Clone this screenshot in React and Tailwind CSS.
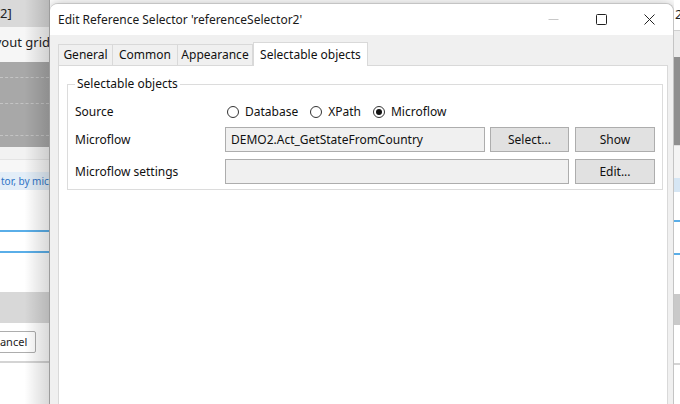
import React from "react";

const font = "font-['Segoe_UI','Noto_Sans',sans-serif]";

const Radio = ({ label, checked }) => (
  <label className="flex items-center gap-[6px]">
    <span className="w-[12px] h-[12px] rounded-full border border-[#333] bg-white flex items-center justify-center">
      {checked && <span className="w-[6px] h-[6px] rounded-full bg-[#111]" />}
    </span>
    <span>{label}</span>
  </label>
);

const Button = ({ children, className = "" }) => (
  <button
    className={`h-[25px] bg-[#e1e1e1] border border-[#adadad] text-[12px] text-[#111] ${className}`}
  >
    {children}
  </button>
);

// background editor peeking out on the left
const LeftStrip = () => (
  <div className="relative w-[50px] shrink-0 h-full overflow-hidden text-[13px] text-[#222] border-r border-[#9c9c9c]">
    <div className="h-[27px] bg-[#d9d9d9] flex items-center whitespace-nowrap">2]</div>
    <div className="h-[35px] bg-[#f6f6f6] flex items-center justify-end whitespace-nowrap pb-[4px] -mr-[1px]">
      Layout grid
    </div>
    <div className="h-[85px] bg-[#a8a8a8] flex flex-col">
      <div className="h-[15px]" />
      <div className="border-t border-dashed border-[#c4c4c4]" />
      <div className="h-[25px]" />
      <div className="border-t border-dashed border-[#c4c4c4]" />
      <div className="h-[31px]" />
      <div className="border-t border-dashed border-[#c4c4c4]" />
    </div>
    <div className="h-[12px] bg-[#f2f2f2]" />
    <div className="h-[13px] bg-[#f7f7f7] border-t border-[#e4e4e4]" />
    <div className="h-[18px] bg-[#e3eef8] flex items-center whitespace-nowrap text-[10px] text-[#2f74c6] pl-[1px]">
      tor, by microflow
    </div>
    <div className="h-[40px] bg-white" />
    <div className="h-[2px] bg-[#5aaee8]" />
    <div className="h-[19px] bg-white" />
    <div className="h-[2px] bg-[#5aaee8]" />
    <div className="h-[39px] bg-white" />
    <div className="h-[31px] bg-[#d8d8d8]" />
    <div className="h-[38px] bg-white flex items-center">
      <span className="-ml-[14px] h-[22px] pl-[6px] pr-[8px] border border-[#adadad] rounded-[2px] bg-white flex items-center text-[11px]">
        Cancel
      </span>
    </div>
    <div className="h-[2px] bg-[#d4d4d4]" />
    <div className="h-[60px] bg-white" />
    <div className="absolute inset-0 bg-linear-to-r from-transparent via-transparent to-black/15" />
  </div>
);

const RightStrip = () => (
  <div className="relative flex-1 h-full overflow-hidden text-[13px] text-[#222]">
    <div className="h-[30px] bg-white flex items-center whitespace-nowrap pl-[1px]">2</div>
    <div className="h-[27px] bg-[#ececec] border-t border-[#d0d0d0]" />
    <div className="h-[88px] bg-[#8f8f8f]" />
    <div className="h-[33px] bg-[#f4f4f4] border-t border-[#dedede]" />
    <div className="h-[14px] bg-[#d6e6f4]" />
    <div className="h-[28px] bg-white" />
    <div className="h-[2px] bg-[#5aaee8]" />
    <div className="h-[31px] bg-white" />
    <div className="h-[2px] bg-[#5aaee8]" />
    <div className="h-[39px] bg-white" />
    <div className="h-[31px] bg-[#c9c9c9]" />
    <div className="h-[38px] bg-white" />
    <div className="h-[2px] bg-[#d4d4d4]" />
    <div className="h-[60px] bg-white" />
  </div>
);

const tabs = [
  { label: "General", w: "w-[55px]" },
  { label: "Common", w: "w-[65px]" },
  { label: "Appearance", w: "w-[75px]" },
];

const App = () => {
  return (
    <div className={`flex w-[680px] h-[404px] overflow-hidden bg-white ${font}`}>
      <LeftStrip />

      <div className="w-[624px] shrink-0 mt-[3px] h-[420px] flex flex-col border-r border-t border-[#c4c4c4] rounded-t-[8px] bg-[#f0f0f0] shadow-[0_0_12px_rgba(0,0,0,0.25)] overflow-hidden">
        {/* title bar */}
        <div className="h-[31px] shrink-0 bg-white flex items-center pl-[8px] text-[12px] text-[#1a1a1a]">
          <span>Edit Reference Selector 'referenceSelector2'</span>
          <div className="ml-auto flex h-full">
            <div className="w-[48px] flex items-center justify-center">
              <svg width="11" height="11" viewBox="0 0 11 11">
                <path d="M0.5 5.5h10" stroke="#c8c8c8" strokeWidth="1" />
              </svg>
            </div>
            <div className="w-[48px] flex items-center justify-center">
              <svg width="11" height="11" viewBox="0 0 11 11">
                <rect x="0.5" y="0.5" width="10" height="10" rx="1" fill="none" stroke="#222" strokeWidth="1" />
              </svg>
            </div>
            <div className="w-[48px] flex items-center justify-center">
              <svg width="11" height="11" viewBox="0 0 11 11">
                <path d="M0.5 0.5l10 10M10.5 0.5l-10 10" stroke="#222" strokeWidth="1" />
              </svg>
            </div>
          </div>
        </div>

        {/* body */}
        <div className="flex-1 flex flex-col px-[8px] pt-[7px] text-[12px] text-[#111]">
          <div className="flex items-end h-[23px]">
            {tabs.map((t, i) => (
              <div
                key={t.label}
                className={`${t.w} h-[21px] flex items-center justify-center border-t border-r border-[#d9d9d9] bg-[#f0f0f0] ${
                  i === 0 ? "border-l" : ""
                }`}
              >
                {t.label}
              </div>
            ))}
            <div className="relative z-10 w-[115px] h-[24px] -mb-px flex items-center justify-center border-t border-x border-[#d9d9d9] bg-white">
              Selectable objects
            </div>
          </div>

          <div className="w-[610px] flex-1 border border-[#d9d9d9] bg-white px-[8px] pt-[10px]">
            <fieldset className="w-[594px] border border-[#dcdcdc] px-[7px] pb-[5px]">
              <legend className="px-[2px] leading-[16px]">Selectable objects</legend>
              <div className="grid grid-cols-[150px_1fr] pt-[9px]">
                <div className="h-[22px] flex items-center">Source</div>
                <div className="h-[22px] flex items-center gap-[12px] pl-[2px]">
                  <Radio label="Database" />
                  <Radio label="XPath" />
                  <Radio label="Microflow" checked />
                </div>

                <div className="mt-[4px] h-[25px] flex items-center">Microflow</div>
                <div className="mt-[4px] flex gap-[5px]">
                  <div className="w-[260px] h-[25px] bg-[#f0f0f0] border border-[#adadad] flex items-center px-[5px] whitespace-nowrap">
                    DEMO2.Act_GetStateFromCountry
                  </div>
                  <Button className="w-[79px]">Select...</Button>
                  <Button className="w-[80px] ml-[1px]">Show</Button>
                </div>

                <div className="mt-[7px] h-[25px] flex items-center">Microflow settings</div>
                <div className="mt-[7px] flex gap-[6px]">
                  <div className="w-[344px] h-[25px] bg-[#f0f0f0] border border-[#adadad]" />
                  <Button className="w-[80px]">Edit...</Button>
                </div>
              </div>
            </fieldset>
          </div>
        </div>
      </div>

      <RightStrip />
    </div>
  );
};

export default App;
